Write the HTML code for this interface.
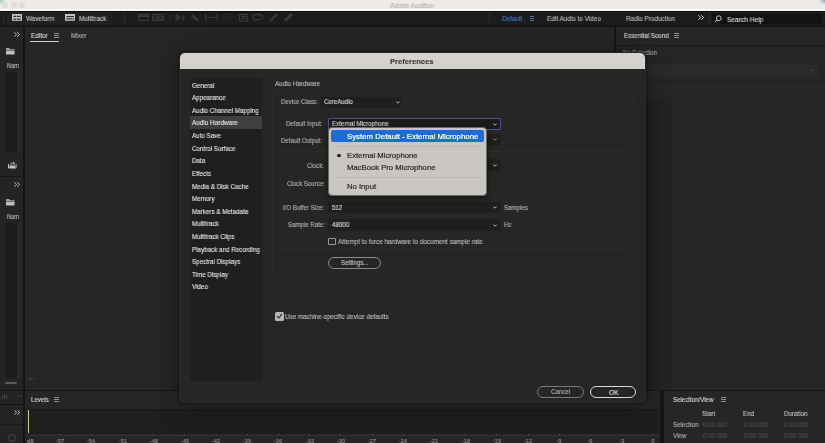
<!DOCTYPE html>
<html><head><meta charset="utf-8">
<style>
*{margin:0;padding:0;box-sizing:border-box}
html,body{width:825px;height:443px;overflow:hidden;background:#161616;font-family:"Liberation Sans",sans-serif;}
.a{position:absolute}
.t{position:absolute;white-space:nowrap;line-height:1;font-size:6.4px;color:#c8c8c8;-webkit-text-stroke:0.12px currentColor;will-change:transform}
.hb{position:absolute;width:4.5px;height:5px;color:#8f8f8f;border-top:1px solid currentColor;border-bottom:1px solid currentColor}
.hb:after{content:"";position:absolute;left:0;right:0;top:1px;height:1px;background:currentColor}
svg{position:absolute;overflow:visible}
</style></head><body>
<!-- mac title bar -->
<div class="a" style="left:0;top:0;width:825px;height:9px;background:#eeebe6"></div>
<div class="a" style="left:0;top:9px;width:825px;height:2px;background:#f9f8f5"></div>
<div class="a" style="left:0;top:11px;width:825px;height:1px;background:#0a0a0a"></div>
<div class="a" style="left:0;top:0;width:5px;height:5px;background:radial-gradient(circle at 0 0,#9fc3c6,rgba(235,233,229,0) 80%)"></div>
<div class="a" style="left:817px;top:0;width:8px;height:4px;background:radial-gradient(circle at 100% 0,#7d9ab5,#cfdde8 45%,rgba(237,235,230,0) 90%)"></div>
<div class="a" style="left:2.4px;top:2px;width:6px;height:6px;border-radius:50%;background:#dedbd8"></div>
<div class="a" style="left:11px;top:2px;width:6px;height:6px;border-radius:50%;background:#dedcd6"></div>
<div class="a" style="left:19.3px;top:2px;width:6px;height:6px;border-radius:50%;background:#dedcd6"></div>
<div class="t" style="left:390px;top:2.00px;color:#b5b2ae;font-size:7.26px;transform:scaleX(0.909);transform-origin:0 0">Adobe Audition</div>

<!-- toolbar -->
<div class="a" style="left:0;top:12px;width:825px;height:13px;background:#1c1c1c"></div>
<div class="a" style="left:0;top:25px;width:825px;height:2px;background:#161616"></div>
<div class="a" style="left:3px;top:12px;width:1px;height:12px;background:#2c2c2c"></div>
<div class="a" style="left:5.5px;top:12px;width:55px;height:13px;background:#212121"></div>
<div class="a" style="left:62px;top:12px;width:50px;height:13px;background:#212121"></div>
<svg style="left:12px;top:14px" width="10" height="7" viewBox="0 0 10 7"><rect x="0" y="0" width="10" height="6.8" fill="#c2c2c2"/><rect x="1.4" y="1.8" width="2.9" height="1.1" fill="#1d1d1d"/><rect x="5.1" y="1.8" width="3.5" height="1.1" fill="#1d1d1d"/><rect x="1.4" y="4.6" width="2.9" height="1.1" fill="#1d1d1d"/><rect x="5.1" y="4.6" width="3.5" height="1.1" fill="#1d1d1d"/></svg>
<div class="t" style="left:26px;top:15.60px;font-size:6.93px;color:#c4c4c4;transform:scaleX(0.909);transform-origin:0 0">Waveform</div>
<svg style="left:64.8px;top:14px" width="10" height="7" viewBox="0 0 10 7"><rect x="0" y="0" width="10" height="6.8" fill="#c2c2c2"/><rect x="1.3" y="2.1" width="7.6" height="1" fill="#1d1d1d"/><rect x="1.3" y="4.4" width="6" height="1" fill="#1d1d1d"/><rect x="7.8" y="4.4" width="1.1" height="1.3" fill="#1d1d1d"/></svg>
<div class="t" style="left:79px;top:15.20px;font-size:7.04px;color:#c4c4c4;transform:scaleX(0.909);transform-origin:0 0">Multitrack</div>
<div class="a" style="left:124px;top:12px;width:1px;height:12px;background:#2a2a2a"></div>
<!-- dim tool icons -->
<svg style="left:138px;top:14px;filter:blur(0.3px)" width="160" height="8" viewBox="0 0 160 8" fill="none" stroke="#3a3a3a" stroke-width="1.1">
<rect x="0.5" y="0.5" width="10" height="6"/><rect x="0.5" y="0.5" width="10" height="2" fill="#353535"/>
<rect x="14.5" y="0.5" width="11" height="6"/><path d="M15 3h10M15 5h10M20 1v6"/>
<path d="M32 0.5v6" stroke="#2a2a2a"/>
<path d="M38 0.5l4 3-4 3z" fill="#353535"/><path d="M43 4h4.5M45.2 1.8v4.5"/>
<path d="M54 1.5l6 5" stroke-width="2.4"/>
<path d="M67.5 0v7M79 0v7M69 3.5h8.5"/>
<path d="M86 0v7M89 0v7M92 0v7" stroke-dasharray="1.2 0.8" stroke-width="0.9"/>
<rect x="101.5" y="0.5" width="8" height="6.5"/><path d="M103 2.5h5M103 4.5h5"/>
<ellipse cx="119.5" cy="3" rx="5" ry="2.6"/><path d="M117 5.5l-1 2"/>
<path d="M132 7l7-7" stroke-width="2.2"/>
<path d="M147 7l7-7" stroke-width="2.8"/>
</svg>
<div class="a" style="left:489px;top:12px;width:1px;height:12px;background:#2a2a2a"></div>
<div class="t" style="left:502px;top:15.20px;font-size:7.04px;color:#4079c0;transform:scaleX(0.909);transform-origin:0 0">Default</div>
<div class="hb" style="left:529.5px;top:16px;color:#4a6f9a"></div>
<div class="t" style="left:547px;top:15.20px;font-size:7.04px;color:#b9b9b9;transform:scaleX(0.909);transform-origin:0 0">Edit Audio to Video</div>
<div class="t" style="left:626px;top:15.20px;font-size:7.04px;color:#b9b9b9;transform:scaleX(0.909);transform-origin:0 0">Radio Production</div>
<svg style="left:697.5px;top:15.2px" width="6" height="5" viewBox="0 0 6 5"><path d="M0.5 0.3L2.6 2.5 0.5 4.7M3.4 0.3L5.5 2.5 3.4 4.7" fill="none" stroke="#d8d8d8" stroke-width="1"/></svg>
<div class="a" style="left:709px;top:12px;width:1px;height:12px;background:#2a2a2a"></div>
<div class="a" style="left:711.5px;top:13.5px;width:110.5px;height:10.5px;background:#121212;border-radius:1px"></div>
<svg style="left:714px;top:14.5px" width="8" height="8" viewBox="0 0 8 8" fill="none" stroke="#c8c8c8" stroke-width="1"><circle cx="4.8" cy="3.2" r="2.4"/><path d="M3.1 4.9L0.8 7.2"/></svg>
<div class="t" style="left:727px;top:15.80px;font-size:7.26px;color:#dedede;transform:scaleX(0.909);transform-origin:0 0">Search Help</div>

<!-- left column -->
<div class="a" style="left:0;top:27px;width:23px;height:416px;background:#242424"></div>
<div class="a" style="left:23px;top:27px;width:1.5px;height:416px;background:#151515"></div>
<!-- editor panel -->
<div class="a" style="left:24.5px;top:27px;width:589.5px;height:362.5px;background:#262626"></div>
<div class="a" style="left:614px;top:27px;width:2px;height:363px;background:#151515"></div>
<!-- essential sound -->
<div class="a" style="left:616px;top:27px;width:209px;height:362.5px;background:#262626"></div>
<div class="a" style="left:0;top:390px;width:825px;height:1px;background:#151515"></div>
<!-- levels -->
<div class="a" style="left:24.5px;top:391px;width:635.5px;height:52px;background:#262626"></div>
<div class="a" style="left:660px;top:391px;width:4px;height:52px;background:#151515"></div>
<!-- selection view -->
<div class="a" style="left:664px;top:391px;width:161px;height:52px;background:#262626"></div>
<!-- left column content -->
<svg style="left:13.5px;top:32.3px" width="6" height="5" viewBox="0 0 6 5"><path d="M0.5 0.3L2.6 2.5 0.5 4.7M3.4 0.3L5.5 2.5 3.4 4.7" fill="none" stroke="#d4d4d4" stroke-width="0.9"/></svg>
<svg style="left:6px;top:48px" width="8.5" height="6.5" viewBox="0 0 8.5 6.5"><path d="M0 0.3h3.2l1 1h4.3V6.5H0z" fill="#c0c0c0"/><path d="M0 2.3h8.5" stroke="#242424" stroke-width="0.7"/></svg>
<div class="t" style="left:6.5px;top:62.70px;font-size:6.27px;color:#b4b4b4;transform:scaleX(0.909);transform-origin:0 0">Nam</div>
<div class="a" style="left:4.5px;top:71.5px;width:17px;height:80px;background:#292929"></div><div class="a" style="left:4.5px;top:71.5px;width:12.5px;height:80px;background:#1c1c1c"></div>
<svg style="left:7.5px;top:162px" width="8.5" height="6.5" viewBox="0 0 8.5 6.5"><path d="M0.5 2v4h7.5V2" fill="none" stroke="#c4c4c4" stroke-width="1"/><rect x="1.5" y="3.5" width="5.5" height="2.5" fill="#c4c4c4"/><path d="M3 3.2V1.2h3.5M5.2 0l1.5 1.2-1.5 1.2" fill="none" stroke="#c4c4c4" stroke-width="0.9"/></svg>
<div class="a" style="left:0;top:176px;width:24px;height:1px;background:#151515"></div>
<svg style="left:13.5px;top:181.8px" width="6" height="5" viewBox="0 0 6 5"><path d="M0.5 0.3L2.6 2.5 0.5 4.7M3.4 0.3L5.5 2.5 3.4 4.7" fill="none" stroke="#d4d4d4" stroke-width="0.9"/></svg>
<svg style="left:6px;top:198.5px" width="8.5" height="6.5" viewBox="0 0 8.5 6.5"><path d="M0 0.3h3.2l1 1h4.3V6.5H0z" fill="#c0c0c0"/><path d="M0 2.3h8.5" stroke="#242424" stroke-width="0.7"/></svg>
<div class="t" style="left:6.5px;top:214.40px;font-size:6.27px;color:#b4b4b4;transform:scaleX(0.909);transform-origin:0 0">Nam</div>
<div class="a" style="left:4.5px;top:223px;width:17px;height:155px;background:#292929"></div><div class="a" style="left:4.5px;top:223px;width:12.5px;height:155px;background:#1c1c1c"></div>
<div class="a" style="left:5px;top:381.5px;width:12px;height:2px;background:#5a5a5a;border-radius:1px"></div>
<svg style="left:2px;top:393px" width="20" height="6" viewBox="0 0 20 6" fill="none" stroke="#4a4a4a" stroke-width="0.9"><path d="M0.5 6V3M2.5 6V1M4.5 6V2.5"/><path d="M15.5 4L17 2.5 18.5 4"/></svg>
<div class="a" style="left:19px;top:408px;width:1px;height:21px;background:#29293d"></div>
<div class="a" style="left:0;top:424px;width:23px;height:0.8px;background:#1c1c1c"></div>
<svg style="left:28px;top:377px" width="8" height="4" viewBox="0 0 8 4" fill="none" stroke="#3c3c3c" stroke-width="0.9"><circle cx="2" cy="2" r="1.3"/><path d="M3.5 2h4"/></svg>
<div class="a" style="left:0;top:404px;width:24px;height:1px;background:#151515"></div>
<svg style="left:13.5px;top:410px" width="6" height="5" viewBox="0 0 6 5"><path d="M0.5 0.3L2.6 2.5 0.5 4.7M3.4 0.3L5.5 2.5 3.4 4.7" fill="none" stroke="#d4d4d4" stroke-width="0.9"/></svg>
<svg style="left:8px;top:434px" width="8" height="8" viewBox="0 0 8 8"><rect x="1" y="1" width="6" height="6" rx="1" fill="none" stroke="#444" stroke-width="1"/></svg>

<!-- editor tabs -->
<div class="t" style="left:31px;top:32.00px;font-size:7.04px;color:#d6d6d6;transform:scaleX(0.909);transform-origin:0 0">Editor</div>
<div class="hb" style="left:54px;top:33px"></div>
<div class="a" style="left:30px;top:40.5px;width:29px;height:1.5px;background:#d0d0d0;border-radius:1px"></div>
<div class="t" style="left:71px;top:32.00px;font-size:7.04px;color:#b0b0b0;transform:scaleX(0.909);transform-origin:0 0">Mixer</div>

<!-- essential sound -->
<div class="t" style="left:624px;top:33.00px;font-size:6.82px;color:#d6d6d6;transform:scaleX(0.909);transform-origin:0 0">Essential Sound</div>
<div class="hb" style="left:674px;top:33px"></div>
<div class="a" style="left:616px;top:45px;width:209px;height:1px;background:#1b1b1b"></div>
<div class="t" style="left:622.5px;top:50.20px;font-size:6.60px;color:#a8a8a8;transform:scaleX(0.909);transform-origin:0 0">No Selection</div>
<div class="a" style="left:616px;top:60.5px;width:209px;height:0.8px;background:#202020"></div>
<div class="a" style="left:630px;top:64.5px;width:188px;height:12px;background:#2b2b2b"></div>
<svg style="left:810px;top:69px" width="4" height="3" viewBox="0 0 4 3"><path d="M0.3 0.5L2 2.2 3.7 0.5" fill="none" stroke="#444" stroke-width="0.9"/></svg>
<div class="a" style="left:616px;top:80.3px;width:209px;height:0.8px;background:#202020"></div>
<div class="a" style="left:616px;top:97.7px;width:209px;height:0.8px;background:#222"></div>
<div class="a" style="left:646px;top:98.5px;width:24px;height:291px;background:linear-gradient(90deg,#202020,#242424)"></div>
<div class="a" style="left:669.5px;top:98.5px;width:0.8px;height:291px;background:#202020"></div>

<!-- levels -->
<div class="t" style="left:31px;top:396.90px;font-size:6.82px;color:#d6d6d6;transform:scaleX(0.909);transform-origin:0 0">Levels</div>
<div class="hb" style="left:54px;top:397px"></div>
<div class="a" style="left:25px;top:409px;width:636px;height:1px;background:#1a1a1a"></div>
<div class="a" style="left:27px;top:410px;width:632px;height:24px;background:#1e1e1e"></div>
<div class="a" style="left:28px;top:410px;width:1px;height:23px;background:#cfcb8c"></div>
<div class="a" style="left:59.6px;top:434px;width:1px;height:2px;background:#555"></div>
<div class="a" style="left:70.0px;top:434.5px;width:1px;height:1.2px;background:#404040"></div>
<div class="a" style="left:80.4px;top:434.5px;width:1px;height:1.2px;background:#404040"></div>
<div class="a" style="left:90.8px;top:434px;width:1px;height:2px;background:#555"></div>
<div class="a" style="left:101.2px;top:434.5px;width:1px;height:1.2px;background:#404040"></div>
<div class="a" style="left:111.6px;top:434.5px;width:1px;height:1.2px;background:#404040"></div>
<div class="a" style="left:122.0px;top:434px;width:1px;height:2px;background:#555"></div>
<div class="a" style="left:132.4px;top:434.5px;width:1px;height:1.2px;background:#404040"></div>
<div class="a" style="left:142.8px;top:434.5px;width:1px;height:1.2px;background:#404040"></div>
<div class="a" style="left:153.2px;top:434px;width:1px;height:2px;background:#555"></div>
<div class="a" style="left:163.6px;top:434.5px;width:1px;height:1.2px;background:#404040"></div>
<div class="a" style="left:174.0px;top:434.5px;width:1px;height:1.2px;background:#404040"></div>
<div class="a" style="left:184.4px;top:434px;width:1px;height:2px;background:#555"></div>
<div class="a" style="left:194.8px;top:434.5px;width:1px;height:1.2px;background:#404040"></div>
<div class="a" style="left:205.2px;top:434.5px;width:1px;height:1.2px;background:#404040"></div>
<div class="a" style="left:215.6px;top:434px;width:1px;height:2px;background:#555"></div>
<div class="a" style="left:225.9px;top:434.5px;width:1px;height:1.2px;background:#404040"></div>
<div class="a" style="left:236.3px;top:434.5px;width:1px;height:1.2px;background:#404040"></div>
<div class="a" style="left:246.7px;top:434px;width:1px;height:2px;background:#555"></div>
<div class="a" style="left:257.1px;top:434.5px;width:1px;height:1.2px;background:#404040"></div>
<div class="a" style="left:267.5px;top:434.5px;width:1px;height:1.2px;background:#404040"></div>
<div class="a" style="left:277.9px;top:434px;width:1px;height:2px;background:#555"></div>
<div class="a" style="left:288.3px;top:434.5px;width:1px;height:1.2px;background:#404040"></div>
<div class="a" style="left:298.7px;top:434.5px;width:1px;height:1.2px;background:#404040"></div>
<div class="a" style="left:309.1px;top:434px;width:1px;height:2px;background:#555"></div>
<div class="a" style="left:319.5px;top:434.5px;width:1px;height:1.2px;background:#404040"></div>
<div class="a" style="left:329.9px;top:434.5px;width:1px;height:1.2px;background:#404040"></div>
<div class="a" style="left:340.3px;top:434px;width:1px;height:2px;background:#555"></div>
<div class="a" style="left:350.7px;top:434.5px;width:1px;height:1.2px;background:#404040"></div>
<div class="a" style="left:361.1px;top:434.5px;width:1px;height:1.2px;background:#404040"></div>
<div class="a" style="left:371.5px;top:434px;width:1px;height:2px;background:#555"></div>
<div class="a" style="left:381.9px;top:434.5px;width:1px;height:1.2px;background:#404040"></div>
<div class="a" style="left:392.3px;top:434.5px;width:1px;height:1.2px;background:#404040"></div>
<div class="a" style="left:402.7px;top:434px;width:1px;height:2px;background:#555"></div>
<div class="a" style="left:413.1px;top:434.5px;width:1px;height:1.2px;background:#404040"></div>
<div class="a" style="left:423.5px;top:434.5px;width:1px;height:1.2px;background:#404040"></div>
<div class="a" style="left:433.9px;top:434px;width:1px;height:2px;background:#555"></div>
<div class="a" style="left:444.3px;top:434.5px;width:1px;height:1.2px;background:#404040"></div>
<div class="a" style="left:454.7px;top:434.5px;width:1px;height:1.2px;background:#404040"></div>
<div class="a" style="left:465.1px;top:434px;width:1px;height:2px;background:#555"></div>
<div class="a" style="left:475.5px;top:434.5px;width:1px;height:1.2px;background:#404040"></div>
<div class="a" style="left:485.9px;top:434.5px;width:1px;height:1.2px;background:#404040"></div>
<div class="a" style="left:496.3px;top:434px;width:1px;height:2px;background:#555"></div>
<div class="a" style="left:506.7px;top:434.5px;width:1px;height:1.2px;background:#404040"></div>
<div class="a" style="left:517.1px;top:434.5px;width:1px;height:1.2px;background:#404040"></div>
<div class="a" style="left:527.5px;top:434px;width:1px;height:2px;background:#555"></div>
<div class="a" style="left:537.8px;top:434.5px;width:1px;height:1.2px;background:#404040"></div>
<div class="a" style="left:548.2px;top:434.5px;width:1px;height:1.2px;background:#404040"></div>
<div class="a" style="left:558.6px;top:434px;width:1px;height:2px;background:#555"></div>
<div class="a" style="left:569.0px;top:434.5px;width:1px;height:1.2px;background:#404040"></div>
<div class="a" style="left:579.4px;top:434.5px;width:1px;height:1.2px;background:#404040"></div>
<div class="a" style="left:589.8px;top:434px;width:1px;height:2px;background:#555"></div>
<div class="a" style="left:600.2px;top:434.5px;width:1px;height:1.2px;background:#404040"></div>
<div class="a" style="left:610.6px;top:434.5px;width:1px;height:1.2px;background:#404040"></div>
<div class="a" style="left:621.0px;top:434px;width:1px;height:2px;background:#555"></div>
<div class="a" style="left:631.4px;top:434.5px;width:1px;height:1.2px;background:#404040"></div>
<div class="a" style="left:641.8px;top:434.5px;width:1px;height:1.2px;background:#404040"></div>
<div class="a" style="left:652.2px;top:434px;width:1px;height:2px;background:#555"></div>
<div class="a" style="left:37.5px;top:434.5px;width:1px;height:1.2px;background:#404040"></div>
<div class="a" style="left:48.2px;top:434.5px;width:1px;height:1.2px;background:#404040"></div>
<div class="a" style="left:27px;top:434.5px;width:632px;height:0.6px;background:#303030"></div>
<div class="t" style="left:27.4px;top:438.00px;font-size:6.16px;color:#969696;transform:scaleX(0.909);transform-origin:0 0">dB</div>
<div class="t" style="left:60.1px;top:438.00px;font-size:6.16px;color:#969696;transform:translateX(-50%) scaleX(0.909)">-57</div>
<div class="t" style="left:91.3px;top:438.00px;font-size:6.16px;color:#969696;transform:translateX(-50%) scaleX(0.909)">-54</div>
<div class="t" style="left:122.5px;top:438.00px;font-size:6.16px;color:#969696;transform:translateX(-50%) scaleX(0.909)">-51</div>
<div class="t" style="left:153.7px;top:438.00px;font-size:6.16px;color:#969696;transform:translateX(-50%) scaleX(0.909)">-48</div>
<div class="t" style="left:184.9px;top:438.00px;font-size:6.16px;color:#969696;transform:translateX(-50%) scaleX(0.909)">-45</div>
<div class="t" style="left:216.1px;top:438.00px;font-size:6.16px;color:#969696;transform:translateX(-50%) scaleX(0.909)">-42</div>
<div class="t" style="left:247.2px;top:438.00px;font-size:6.16px;color:#969696;transform:translateX(-50%) scaleX(0.909)">-39</div>
<div class="t" style="left:278.4px;top:438.00px;font-size:6.16px;color:#969696;transform:translateX(-50%) scaleX(0.909)">-36</div>
<div class="t" style="left:309.6px;top:438.00px;font-size:6.16px;color:#969696;transform:translateX(-50%) scaleX(0.909)">-33</div>
<div class="t" style="left:340.8px;top:438.00px;font-size:6.16px;color:#969696;transform:translateX(-50%) scaleX(0.909)">-30</div>
<div class="t" style="left:372.0px;top:438.00px;font-size:6.16px;color:#969696;transform:translateX(-50%) scaleX(0.909)">-27</div>
<div class="t" style="left:403.2px;top:438.00px;font-size:6.16px;color:#969696;transform:translateX(-50%) scaleX(0.909)">-24</div>
<div class="t" style="left:434.4px;top:438.00px;font-size:6.16px;color:#969696;transform:translateX(-50%) scaleX(0.909)">-21</div>
<div class="t" style="left:465.6px;top:438.00px;font-size:6.16px;color:#969696;transform:translateX(-50%) scaleX(0.909)">-18</div>
<div class="t" style="left:496.8px;top:438.00px;font-size:6.16px;color:#969696;transform:translateX(-50%) scaleX(0.909)">-15</div>
<div class="t" style="left:528.0px;top:438.00px;font-size:6.16px;color:#969696;transform:translateX(-50%) scaleX(0.909)">-12</div>
<div class="t" style="left:559.1px;top:438.00px;font-size:6.16px;color:#969696;transform:translateX(-50%) scaleX(0.909)">-9</div>
<div class="t" style="left:590.3px;top:438.00px;font-size:6.16px;color:#969696;transform:translateX(-50%) scaleX(0.909)">-6</div>
<div class="t" style="left:621.5px;top:438.00px;font-size:6.16px;color:#969696;transform:translateX(-50%) scaleX(0.909)">-3</div>
<div class="t" style="left:652.7px;top:438.00px;font-size:6.16px;color:#969696;transform:translateX(-50%) scaleX(0.909)">0</div>

<!-- selection view -->
<div class="t" style="left:672.5px;top:397.40px;font-size:6.82px;color:#d6d6d6;transform:scaleX(0.909);transform-origin:0 0">Selection/View</div>
<div class="hb" style="left:721px;top:397px"></div>
<div class="t" style="left:701.5px;top:410.90px;font-size:6.82px;color:#c0c0c0;transform:scaleX(0.909);transform-origin:0 0">Start</div>
<div class="t" style="left:742.5px;top:410.90px;font-size:6.82px;color:#c0c0c0;transform:scaleX(0.909);transform-origin:0 0">End</div>
<div class="t" style="left:784px;top:410.90px;font-size:6.82px;color:#c0c0c0;transform:scaleX(0.909);transform-origin:0 0">Duration</div>
<div class="t" style="left:672.5px;top:421.90px;font-size:6.82px;color:#b0b0b0;transform:scaleX(0.909);transform-origin:0 0">Selection</div>
<div class="t" style="left:672.5px;top:433.40px;font-size:6.82px;color:#b0b0b0;transform:scaleX(0.909);transform-origin:0 0">View</div>
<div class="t" style="left:702.5px;top:421.90px;font-size:6.82px;color:#4e4e4e;transform:scaleX(0.909);transform-origin:0 0">0:00.000</div>
<div class="t" style="left:743.5px;top:421.90px;font-size:6.82px;color:#4e4e4e;transform:scaleX(0.909);transform-origin:0 0">0:00.000</div>
<div class="t" style="left:784px;top:421.90px;font-size:6.82px;color:#4e4e4e;transform:scaleX(0.909);transform-origin:0 0">0:00.000</div>
<div class="t" style="left:702.5px;top:433.40px;font-size:6.82px;color:#4e4e4e;transform:scaleX(0.909);transform-origin:0 0">0:00.000</div>
<div class="t" style="left:743.5px;top:433.40px;font-size:6.82px;color:#4e4e4e;transform:scaleX(0.909);transform-origin:0 0">0:00.000</div>
<div class="t" style="left:784px;top:433.40px;font-size:6.82px;color:#4e4e4e;transform:scaleX(0.909);transform-origin:0 0">0:00.000</div>
<!-- dialog -->
<div class="a" style="left:179px;top:52px;width:467px;height:351px;background:#262626;border-radius:5px;border:1px solid #292929;box-shadow:0 0 3px 1px rgba(0,0,0,.35),0 2px 24px 2px rgba(0,0,0,.3)"></div>
<div class="a" style="left:180px;top:53px;width:465px;height:16px;background:#d5d1cd;border-radius:5px 5px 0 0"></div>
<div class="t" style="left:389.5px;top:57.5px;font-size:7.6px;font-weight:bold;color:#3a3836">Preferences</div>

<!-- list -->
<div class="a" style="left:190.3px;top:78px;width:72px;height:302.5px;background:#1f1f1f;border-radius:2px"></div>
<div class="a" style="left:190.3px;top:116.3px;width:72px;height:12.5px;background:#3f3f3f"></div>
<div id="list" style="position:absolute;left:192.4px;top:0.4px;font-size:6.25px">
<div class="t" style="left:0;top:82.40px;font-size:6.88px;color:#e2e2e2;transform:scaleX(0.909);transform-origin:0 0">General</div>
<div class="t" style="left:0;top:95.00px;font-size:6.88px;color:#e2e2e2;transform:scaleX(0.909);transform-origin:0 0">Appearance</div>
<div class="t" style="left:0;top:107.60px;font-size:6.88px;color:#e2e2e2;transform:scaleX(0.909);transform-origin:0 0">Audio Channel Mapping</div>
<div class="t" style="left:0;top:119.8px;color:#e0e0e0">Audio Hardware</div>
<div class="t" style="left:0;top:132.80px;font-size:6.88px;color:#e2e2e2;transform:scaleX(0.909);transform-origin:0 0">Auto Save</div>
<div class="t" style="left:0;top:145.40px;font-size:6.88px;color:#e2e2e2;transform:scaleX(0.909);transform-origin:0 0">Control Surface</div>
<div class="t" style="left:0;top:158.00px;font-size:6.88px;color:#e2e2e2;transform:scaleX(0.909);transform-origin:0 0">Data</div>
<div class="t" style="left:0;top:170.60px;font-size:6.88px;color:#e2e2e2;transform:scaleX(0.909);transform-origin:0 0">Effects</div>
<div class="t" style="left:0;top:183.20px;font-size:6.88px;color:#e2e2e2;transform:scaleX(0.909);transform-origin:0 0">Media &amp; Disk Cache</div>
<div class="t" style="left:0;top:195.80px;font-size:6.88px;color:#e2e2e2;transform:scaleX(0.909);transform-origin:0 0">Memory</div>
<div class="t" style="left:0;top:208.40px;font-size:6.88px;color:#e2e2e2;transform:scaleX(0.909);transform-origin:0 0">Markers &amp; Metadata</div>
<div class="t" style="left:0;top:221.00px;font-size:6.88px;color:#e2e2e2;transform:scaleX(0.909);transform-origin:0 0">Multitrack</div>
<div class="t" style="left:0;top:233.60px;font-size:6.88px;color:#e2e2e2;transform:scaleX(0.909);transform-origin:0 0">Multitrack Clips</div>
<div class="t" style="left:0;top:246.20px;font-size:6.88px;color:#e2e2e2;transform:scaleX(0.909);transform-origin:0 0">Playback and Recording</div>
<div class="t" style="left:0;top:258.80px;font-size:6.88px;color:#e2e2e2;transform:scaleX(0.909);transform-origin:0 0">Spectral Displays</div>
<div class="t" style="left:0;top:271.40px;font-size:6.88px;color:#e2e2e2;transform:scaleX(0.909);transform-origin:0 0">Time Display</div>
<div class="t" style="left:0;top:284.00px;font-size:6.88px;color:#e2e2e2;transform:scaleX(0.909);transform-origin:0 0">Video</div>
</div>

<!-- content -->
<div class="t" style="left:275px;top:80.90px;font-size:6.93px;color:#bdbdbd;transform:scaleX(0.909);transform-origin:0 0">Audio Hardware</div>
<div class="a" style="left:272px;top:89px;width:363px;height:185px;border:1px solid #2c2c2c;border-radius:2px"></div>
<div class="a" style="left:279px;top:102px;width:355px;height:1px;background:#2c2c2c"></div>
<div class="a" style="left:279px;top:151px;width:350px;height:1px;background:#2c2c2c"></div>
<div class="a" style="left:279px;top:194.5px;width:345px;height:1px;background:#2c2c2c"></div>
<div class="a" style="left:279px;top:247.5px;width:350px;height:1px;background:#2c2c2c"></div>

<div class="t" style="left:281px;top:99.40px;font-size:6.60px;color:#b3b3b3;transform:scaleX(0.909);transform-origin:0 0">Device Class:</div>
<div class="a" style="left:321px;top:97px;width:80px;height:11px;background:#1f1f1f;border-radius:1px"></div>
<div class="t" style="left:324px;top:99.40px;font-size:6.71px;color:#dedede;transform:scaleX(0.909);transform-origin:0 0">CoreAudio</div>
<svg style="left:395.5px;top:100.5px" width="4" height="3" viewBox="0 0 4 3"><path d="M0.3 0.5L2 2.2 3.7 0.5" fill="none" stroke="#c8c8c8" stroke-width="0.9"/></svg>

<div class="t" style="left:285.5px;top:121.40px;font-size:6.71px;color:#b3b3b3;transform:scaleX(0.909);transform-origin:0 0">Default Input:</div>
<div class="a" style="left:328px;top:118px;width:172.5px;height:12px;background:#1b1b1b;border:1px solid #4b5686;border-radius:1px"></div>
<div class="t" style="left:331.5px;top:121.40px;font-size:6.82px;color:#dedede;transform:scaleX(0.909);transform-origin:0 0">External Microphone</div>
<svg style="left:492.5px;top:122.5px" width="4" height="3" viewBox="0 0 4 3"><path d="M0.3 0.5L2 2.2 3.7 0.5" fill="none" stroke="#c8c8c8" stroke-width="0.9"/></svg>

<div class="t" style="left:281px;top:138.40px;font-size:6.71px;color:#b3b3b3;transform:scaleX(0.909);transform-origin:0 0">Default Output:</div>
<div class="a" style="left:328px;top:134px;width:172.5px;height:12px;background:#1f1f1f;border-radius:1px"></div>
<svg style="left:492.5px;top:138px" width="4" height="3" viewBox="0 0 4 3"><path d="M0.3 0.5L2 2.2 3.7 0.5" fill="none" stroke="#d08a3a" stroke-width="0.9"/></svg>

<div class="t" style="left:307px;top:162.90px;font-size:6.71px;color:#b3b3b3;transform:scaleX(0.909);transform-origin:0 0">Clock:</div>
<div class="a" style="left:328px;top:159px;width:172.5px;height:12px;background:#1f1f1f;border-radius:1px"></div>
<svg style="left:492.5px;top:163.5px" width="4" height="3" viewBox="0 0 4 3"><path d="M0.3 0.5L2 2.2 3.7 0.5" fill="none" stroke="#c8c8c8" stroke-width="0.9"/></svg>

<div class="t" style="left:287px;top:180.90px;font-size:6.71px;color:#b3b3b3;transform:scaleX(0.909);transform-origin:0 0">Clock Source:</div>

<div class="t" style="left:282.5px;top:204.90px;font-size:6.71px;color:#b3b3b3;transform:scaleX(0.909);transform-origin:0 0">I/O Buffer Size:</div>
<div class="a" style="left:328px;top:201.5px;width:172.5px;height:11.5px;background:#1f1f1f;border-radius:1px"></div>
<div class="t" style="left:332px;top:204.90px;font-size:6.82px;color:#dedede;transform:scaleX(0.909);transform-origin:0 0">512</div>
<svg style="left:492.5px;top:206px" width="4" height="3" viewBox="0 0 4 3"><path d="M0.3 0.5L2 2.2 3.7 0.5" fill="none" stroke="#c8c8c8" stroke-width="0.9"/></svg>
<div class="t" style="left:503.5px;top:204.90px;font-size:6.82px;color:#b3b3b3;transform:scaleX(0.909);transform-origin:0 0">Samples</div>

<div class="t" style="left:288px;top:222.40px;font-size:6.71px;color:#b3b3b3;transform:scaleX(0.909);transform-origin:0 0">Sample Rate:</div>
<div class="a" style="left:328px;top:219px;width:172.5px;height:11.5px;background:#1f1f1f;border-radius:1px"></div>
<div class="t" style="left:332px;top:222.40px;font-size:6.82px;color:#dedede;transform:scaleX(0.909);transform-origin:0 0">48000</div>
<svg style="left:492.5px;top:223.5px" width="4" height="3" viewBox="0 0 4 3"><path d="M0.3 0.5L2 2.2 3.7 0.5" fill="none" stroke="#c8c8c8" stroke-width="0.9"/></svg>
<div class="t" style="left:503.5px;top:222.40px;font-size:6.82px;color:#b3b3b3;transform:scaleX(0.909);transform-origin:0 0">Hz</div>

<div class="a" style="left:328px;top:237.5px;width:7.5px;height:7.5px;border:1px solid #9a9a9a;border-radius:1px"></div>
<div class="t" style="left:337.5px;top:238.00px;font-size:6.99px;color:#bdbdbd;transform:scaleX(0.909);transform-origin:0 0">Attempt to force hardware to document sample rate</div>

<div class="a" style="left:327.5px;top:256.5px;width:53px;height:12px;border:1px solid #8a8a8a;border-radius:6px"></div>
<div class="t" style="left:341px;top:259.90px;font-size:6.82px;color:#c8c8c8;transform:scaleX(0.909);transform-origin:0 0">Settings...</div>

<div class="a" style="left:275px;top:311.5px;width:8.5px;height:9px;background:#b5b5b5;border-radius:1.5px"></div>
<svg style="left:276px;top:313px" width="7" height="6" viewBox="0 0 7 6"><path d="M1 3.2L2.8 5 6 0.8" fill="none" stroke="#2a2a2a" stroke-width="1.1"/></svg>
<div class="t" style="left:284.5px;top:313.90px;font-size:6.93px;color:#bdbdbd;transform:scaleX(0.909);transform-origin:0 0">Use machine-specific device defaults</div>

<div class="a" style="left:537px;top:385.5px;width:46.5px;height:12px;border:1px solid #7a7a7a;border-radius:6px"></div>
<div class="t" style="left:551px;top:389.40px;font-size:6.82px;color:#b0b0b0;transform:scaleX(0.909);transform-origin:0 0">Cancel</div>
<div class="a" style="left:590px;top:385.5px;width:46px;height:12px;border:1.2px solid #d8d8d8;border-radius:6px"></div>
<div class="t" style="left:608.5px;top:388.70px;font-size:7.26px;color:#f0f0f0;-webkit-text-stroke:0.1px #f0f0f0;transform:scaleX(0.909);transform-origin:0 0">OK</div>

<!-- popup menu -->
<div class="a" style="left:328px;top:126.5px;width:158.8px;height:69px;background:#c9c5c0;border-radius:4px;border:0.5px solid #6d6a66;box-shadow:0 2px 6px rgba(0,0,0,.5)"></div>
<div class="a" style="left:330.8px;top:130px;width:153px;height:11.8px;background:#1d6bd8;border-radius:2.5px"></div>
<div class="t" style="left:347px;top:133px;font-size:7.8px;color:#ffffff;-webkit-text-stroke:0.2px #fff">System Default - External Microphone</div>
<div class="a" style="left:336px;top:146px;width:145px;height:0.8px;background:#b9b5b0"></div>
<div class="a" style="left:337.3px;top:153.7px;width:3.6px;height:3.6px;border-radius:50%;background:#222"></div>
<div class="t" style="left:347px;top:152px;font-size:7.7px;color:#2a2826;-webkit-text-stroke:0.2px #2a2826">External Microphone</div>
<div class="t" style="left:347px;top:164.4px;font-size:7.7px;color:#2a2826;-webkit-text-stroke:0.2px #2a2826">MacBook Pro Microphone</div>
<div class="a" style="left:336px;top:177px;width:145px;height:0.8px;background:#b9b5b0"></div>
<div class="t" style="left:347px;top:183.1px;font-size:7.7px;color:#2a2826;-webkit-text-stroke:0.2px #2a2826">No Input</div>
</body></html>
